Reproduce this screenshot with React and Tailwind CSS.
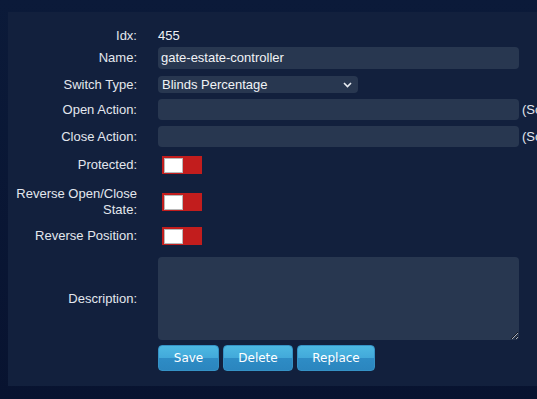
import React from 'react';

const Toggle = () => (
  <div className="w-[40px] h-[18px] bg-[#c21d1d] flex items-center px-[2px]">
    <div className="w-[19px] h-[15px] bg-white border border-[#b8b8b8]" />
  </div>
);

const Row = ({ label, children, className = '' }) => (
  <div className={'grid grid-cols-[129px_1fr] gap-x-[21px] items-center ' + className}>
    <div className="text-right leading-[16px]">{label}</div>
    <div className="flex items-center">{children}</div>
  </div>
);

const Button = ({ children, width }) => (
  <button
    className={'h-[26px] rounded-[4px] text-white text-[12px] border border-[#3592c6] bg-[linear-gradient(to_bottom,#4db8e2_0%,#42a9da_50%,#2e8cc5_52%,#2b86bf_100%)] ' + width}
    style={{ fontFamily: '"DejaVu Sans", Verdana, sans-serif' }}
  >
    {children}
  </button>
);

export default function App() {
  return (
    <div
      className="w-[537px] h-[399px] overflow-hidden bg-[linear-gradient(to_bottom,#0b1a39_0%,#081330_100%)] pt-[12px] pl-[8px] text-[13px] text-[#e3e7ee]"
      style={{ fontFamily: '"Liberation Sans", Arial, sans-serif' }}
    >
      <div className="w-[560px] h-[374px] bg-[#12203d] pt-[14px]">
        <Row label="Idx:" className="h-[16px]">
          <span className="text-[#eef1f5]">455</span>
        </Row>
        <Row label="Name:" className="mt-[5px]">
          <div className="w-[361px] h-[22px] rounded-[4px] bg-[#283750] px-[3px] flex items-center text-[#f1f3f6]">
            gate-estate-controller
          </div>
        </Row>
        <Row label="Switch Type:" className="mt-[7px]">
          <div className="w-[200px] h-[17px] rounded-[4px] bg-[#283750] pl-[4px] pr-[6px] flex items-center justify-between text-[#f1f3f6]">
            <span>Blinds Percentage</span>
            <svg width="9" height="6" viewBox="0 0 9 6" className="mt-[1px]">
              <path d="M1 1 L4.5 4.5 L8 1" fill="none" stroke="#e8ecf2" strokeWidth="1.6" />
            </svg>
          </div>
        </Row>
        <Row label="Open Action:" className="mt-[6px]">
          <div className="w-[361px] h-[21px] rounded-[4px] bg-[#283750] shrink-0" />
          <span className="ml-[3px] whitespace-nowrap">(Script)</span>
        </Row>
        <Row label="Close Action:" className="mt-[6px]">
          <div className="w-[361px] h-[21px] rounded-[4px] bg-[#283750] shrink-0" />
          <span className="ml-[3px] whitespace-nowrap">(Script)</span>
        </Row>
        <Row label="Protected:" className="mt-[9px]">
          <div className="pl-[4px]">
            <Toggle />
          </div>
        </Row>
        <Row label="Reverse Open/Close State:" className="mt-[12px]">
          <div className="pl-[4px]">
            <Toggle />
          </div>
        </Row>
        <Row label="Reverse Position:" className="mt-[9px]">
          <div className="pl-[4px]">
            <Toggle />
          </div>
        </Row>
        <Row label="Description:" className="mt-[12px]">
          <textarea className="w-[361px] h-[83px] rounded-[4px] bg-[#283750] outline-none" />
        </Row>
        <div className="grid grid-cols-[129px_1fr] gap-x-[21px] mt-[5px]">
          <div />
          <div className="flex gap-[4px]">
            <Button width="w-[61px]">Save</Button>
            <Button width="w-[70px]">Delete</Button>
            <Button width="w-[78px]">Replace</Button>
          </div>
        </div>
      </div>
    </div>
  );
}
